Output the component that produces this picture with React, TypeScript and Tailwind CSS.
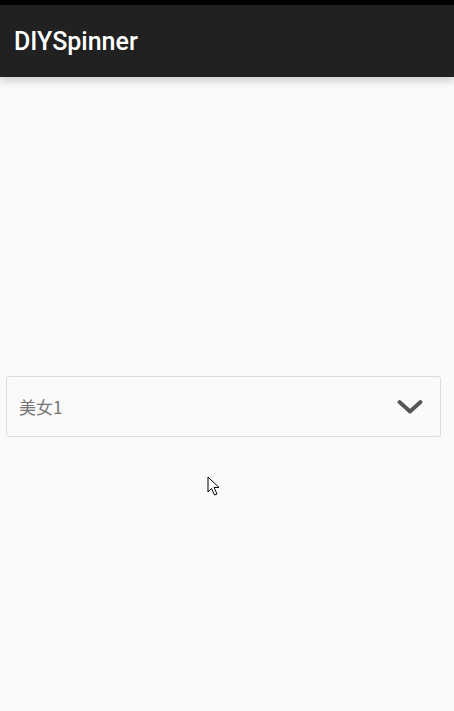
import React from "react";

export default function App() {
  return (
    <div
      className="relative w-full h-[711px] bg-[#fafafa] flex flex-col overflow-hidden"
      style={{ fontFamily: 'Roboto, "Noto Sans CJK SC", sans-serif' }}
    >
      <div className="h-[5px] bg-black shrink-0" />
      <div className="relative z-10 h-[72px] shrink-0 bg-[#212121] flex items-center px-[14px] shadow-[0_4px_8px_rgba(0,0,0,0.18)]">
        <span className="text-white text-[25px] font-medium leading-none pt-[1px]">DIYSpinner</span>
      </div>
      <div className="flex flex-col pt-[299px] pl-[6px] pr-[13px]">
        <div className="h-[61px] border border-[#dcdcdc] rounded-[3px] bg-[#fafafa] flex items-center justify-between pl-[12px] pr-[17px]">
          <span className="text-[17px] text-[#757575]" style={{ fontFamily: '"Noto Sans CJK SC", Roboto, sans-serif' }}>
            美女1
          </span>
          <svg width="26" height="16" viewBox="0 0 26 16" className="mt-[1px]">
            <path d="M2.5 3 L13 12.5 L23.5 3" fill="none" stroke="#555555" strokeWidth="3.8" strokeLinecap="round" strokeLinejoin="round" />
          </svg>
        </div>
      </div>
      <svg className="absolute left-[207px] top-[476px]" width="14" height="22" viewBox="0 0 14 22">
        <path d="M1 1 L1 16 L4.5 12.5 L7.5 19 L10 18 L7 11.5 L12 11.5 Z" fill="#ffffff" stroke="#000000" strokeWidth="1" strokeLinejoin="miter" />
      </svg>
    </div>
  );
}
